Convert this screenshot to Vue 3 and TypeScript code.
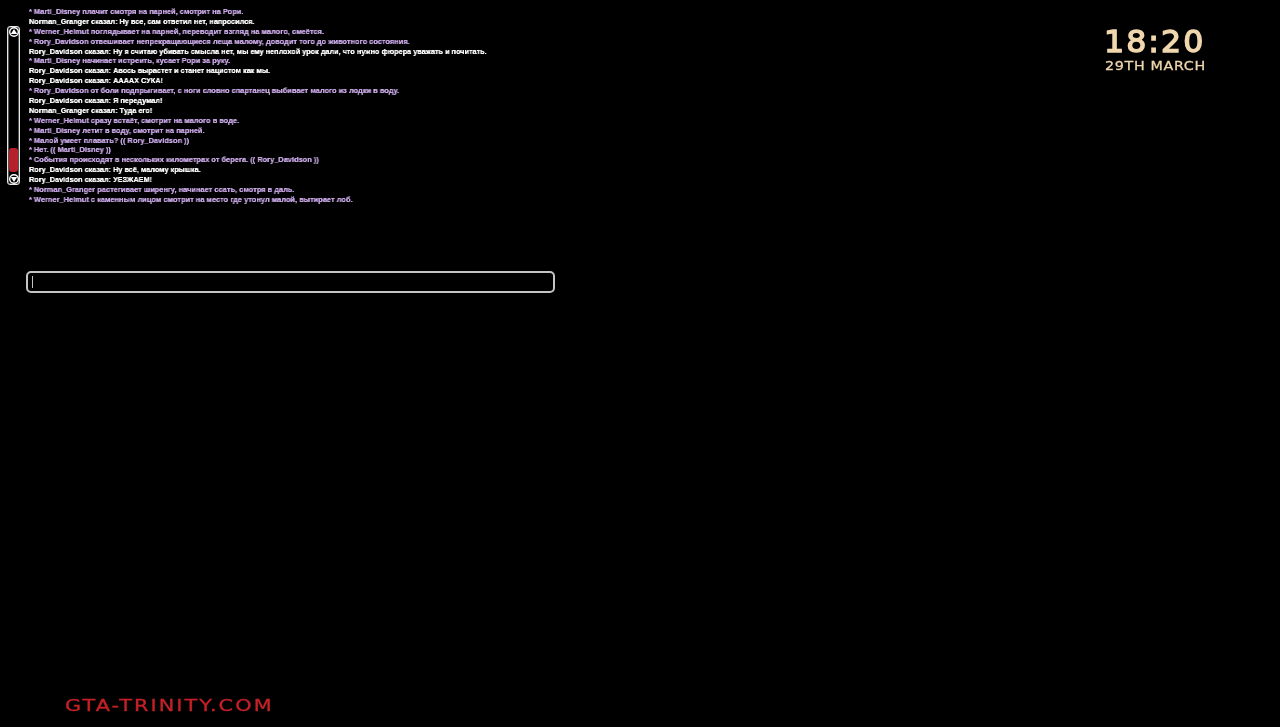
<script setup lang="ts">
interface Line { text: string; me: boolean }
const raw: string[] = [
  '* Marti_Disney плачит смотря на парней, смотрит на Рори.',
  'Norman_Granger сказал: Ну все, сам ответил нет, напросился.',
  '* Werner_Helmut поглядывает на парней, переводит взгляд на малого, смеётся.',
  '* Rory_Davidson отвешивает непрекращающиеся леща малому, доводит того до животного состояния.',
  'Rory_Davidson сказал: Ну я считаю убивать смысла нет, мы ему неплохой урок дали, что нужно фюрера уважать и почитать.',
  '* Marti_Disney начинает истреить, кусает Рори за руку.',
  'Rory_Davidson сказал: Авось вырастет и станет нацистом как мы.',
  'Rory_Davidson сказал: АААAХ СУКА!',
  '* Rory_Davidson от боли подпрыгивает, с ноги словно спартанец выбивает малого из лодки в воду.',
  'Rory_Davidson сказал: Я передумал!',
  'Norman_Granger сказал: Туда его!',
  '* Werner_Helmut сразу встаёт, смотрит на малого в воде.',
  '* Marti_Disney летит в воду, смотрит на парней.',
  '* Малой умеет плавать? (( Rory_Davidson ))',
  '* Нет. (( Marti_Disney ))',
  '* События происходят в нескольких километрах от берега. (( Rory_Davidson ))',
  'Rory_Davidson сказал: Ну всё, малому крышка.',
  'Rory_Davidson сказал: УЕЗЖАЕМ!',
  '* Norman_Granger растегивает ширенгу, начинает ссать, смотря в даль.',
  '* Werner_Helmut с каменным лицом смотрит на место где утонул малой, вытирает лоб.',
]
const lines: Line[] = raw.map((text) => ({ text, me: text.startsWith('*') }))
</script>

<template>
  <div class="screen">
    <div class="top">
      <div class="chat-area">
        <div class="chat-row">
          <div class="scrollbar">
            <svg class="arrow" viewBox="0 0 10 10" width="10" height="10">
              <circle cx="5" cy="5" r="4.3" fill="none" stroke="#fff" stroke-width="1.4" />
              <path d="M5 2 L8.2 7 L1.8 7 Z" fill="#fff" />
            </svg>
            <div class="track"><div class="thumb"></div></div>
            <svg class="arrow" viewBox="0 0 10 10" width="10" height="10">
              <circle cx="5" cy="5" r="4.3" fill="none" stroke="#fff" stroke-width="1.4" />
              <path d="M5 8 L8.2 3 L1.8 3 Z" fill="#fff" />
            </svg>
          </div>
          <div class="log">
            <div v-for="(l, i) in lines" :key="i" class="line" :class="{ me: l.me }">{{ l.text }}</div>
          </div>
        </div>
        <div class="input"><span class="caret"></span></div>
      </div>
      <div class="clock">
        <div class="time">18:20</div>
        <div class="date">29TH MARCH</div>
      </div>
    </div>
    <div class="site">GTA-TRINITY.COM</div>
  </div>
</template>

<style>
html, body { margin: 0; background: #000; }
</style>

<style scoped>
.screen {
  width: 1280px;
  height: 727px;
  background: #000;
  overflow: hidden;
  display: flex;
  flex-direction: column;
  justify-content: space-between;
  box-sizing: border-box;
  font-family: "Liberation Sans", Arial, sans-serif;
}
.top {
  display: flex;
  justify-content: space-between;
  align-items: flex-start;
}
.chat-area {
  display: flex;
  flex-direction: column;
  padding-left: 7px;
}
.chat-row {
  display: flex;
  align-items: flex-start;
  height: 271px;
}
.scrollbar {
  margin-top: 26px;
  width: 13px;
  height: 159px;
  box-sizing: border-box;
  border: 1px solid #e8e8e8;
  border-radius: 3px;
  box-shadow: inset 0 0 0 0.5px #aaa;
  display: flex;
  flex-direction: column;
  align-items: center;
}
.arrow { flex: none; margin: 0; }
.track {
  flex: 1;
  width: 100%;
  display: flex;
  flex-direction: column;
  justify-content: flex-end;
  align-items: center;
  padding-bottom: 2px;
  box-sizing: border-box;
}
.thumb {
  width: 9px;
  height: 24px;
  border-radius: 3px;
  background: #b5202a;
}
.log {
  margin-left: 9px;
  padding-top: 7px;
}
.line {
  height: 9.9px;
  line-height: 10px;
  font-size: 8px;
  font-weight: 700;
  color: #fff;
  white-space: nowrap;
  transform: scaleX(0.912);
  transform-origin: left center;
  will-change: transform;
  text-shadow: 0 0 0.6px currentColor;
}
.line.me {
  color: #c9a8e6;
  transform: scaleX(0.93);
}
.input {
  margin-left: 19px;
  width: 529px;
  height: 22px;
  box-sizing: border-box;
  border: 2px solid #c4c4c4;
  border-radius: 5px;
  display: flex;
  align-items: center;
  padding-left: 4px;
}
.caret {
  width: 1px;
  height: 12px;
  background: #c4c4c4;
}
.clock {
  margin: 28px 74px 0 0;
  width: 102px;
  color: #f0d7ae;
  display: flex;
  flex-direction: column;
  align-items: flex-start;
  font-family: "DejaVu Sans", sans-serif;
}
.time {
  font-size: 31px;
  line-height: 26px;
  height: 28px;
  font-weight: 400;
  letter-spacing: 2px;
  -webkit-text-stroke: 1.4px #f0d7ae;
  transform: scaleX(1.02);
  transform-origin: left center;
  will-change: transform;
  white-space: nowrap;
}
.date {
  font-size: 13px;
  line-height: 15px;
  margin-top: 2px;
  margin-left: 1px;
  letter-spacing: 0.6px;
  -webkit-text-stroke: 0.3px #f0d7ae;
  transform: scaleX(1.1);
  transform-origin: left center;
  will-change: transform;
  white-space: nowrap;
}
.site {
  margin: 0 0 13px 65px;
  color: #c42127;
  font-family: "DejaVu Sans", sans-serif;
  font-size: 16px;
  line-height: 16px;
  letter-spacing: 1.6px;
  -webkit-text-stroke: 0.3px #c42127;
  transform: scaleX(1.3);
  transform-origin: left center;
  will-change: transform;
  white-space: nowrap;
}
</style>
